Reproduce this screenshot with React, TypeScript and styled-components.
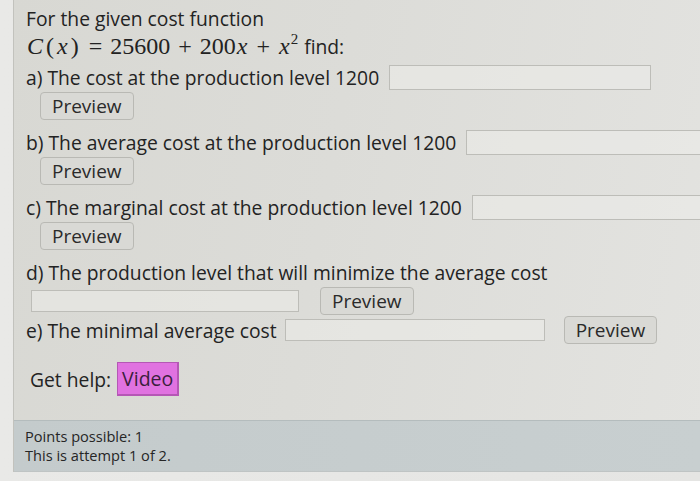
import styled, { createGlobalStyle } from 'styled-components'

const GlobalStyle = createGlobalStyle`
  html, body {
    margin: 0;
    padding: 0;
    width: 700px;
    height: 481px;
    overflow: hidden;
    background: #e7e7e4;
  }
  * {
    box-sizing: border-box;
  }
`

const questions = [
  { label: 'a) The cost at the production level 1200' },
  { label: 'b) The average cost at the production level 1200' },
  { label: 'c) The marginal cost at the production level 1200' },
]

function App() {
  return (
    <>
      <GlobalStyle />
      <Page>
        <Card>
          <Body>
            <Line>For the given cost function</Line>
            <MathLine>
              <Formula>
                <Var>C</Var>
                <Paren>(</Paren>
                <Var>x</Var>
                <Paren>)</Paren>
                <Op>=</Op>
                <span>25600</span>
                <Op>+</Op>
                <span>200</span>
                <Var>x</Var>
                <Op>+</Op>
                <Var>x</Var>
                <Sup>2</Sup>
              </Formula>
              <span>find:</span>
            </MathLine>

            {questions.map((q) => (
              <Block key={q.label}>
                <QuestionLine>
                  {q.label}
                  <AnswerBox />
                </QuestionLine>
                <ButtonRow>
                  <PreviewButton>Preview</PreviewButton>
                </ButtonRow>
              </Block>
            ))}

            <QuestionLine>
              d) The production level that will minimize the average cost
            </QuestionLine>
            <InlineRow $indent={5} $gap={21}>
              <AnswerBox $width={268} $height={22} $inline={false} />
              <PreviewButton>Preview</PreviewButton>
            </InlineRow>

            <InlineRow $indent={0} $gap={8} $top={1}>
              <span>e) The minimal average cost</span>
              <AnswerBox $width={260} $height={22} $inline={false} />
              <PreviewButton $shift={11}>Preview</PreviewButton>
            </InlineRow>

            <HelpRow>
              <span>Get help:</span>
              <VideoButton>Video</VideoButton>
            </HelpRow>
          </Body>

          <Footer>
            <FooterLine>Points possible: 1</FooterLine>
            <FooterLine>This is attempt 1 of 2.</FooterLine>
          </Footer>
        </Card>
      </Page>
    </>
  )
}

export default App

const Page = styled.div`
  width: 700px;
  height: 481px;
  padding: 0 0 9px 13px;
  display: flex;
  background: linear-gradient(90deg, #e9e9e7 0%, #e5e5e3 100%);
`

const Card = styled.div`
  flex: 1;
  display: flex;
  flex-direction: column;
  border-left: 1px solid #c2c2bd;
  background: linear-gradient(100deg, #d8d8d3 0%, #dcdcd8 45%, #e3e3e0 100%);
  overflow: hidden;
`

const Body = styled.div`
  flex: 1;
  padding: 5px 0 0 12px;
  font-family: 'Open Sans', 'Noto Sans', sans-serif;
  font-size: 19.3px;
  color: #232323;
  white-space: nowrap;
`

const Line = styled.div`
  height: 27px;
  line-height: 27px;
`

const MathLine = styled.div`
  height: 28px;
  display: flex;
  align-items: center;
  gap: 6px;
  margin-bottom: 2px;
`

const Formula = styled.span`
  font-family: 'Liberation Serif', 'DejaVu Serif', serif;
  font-size: 24px;
  color: #222;
  display: inline-flex;
  align-items: baseline;
`

const Var = styled.i`
  font-style: italic;
  margin: 0 1px;
`

const Paren = styled.span`
  margin: 0 2px;
`

const Op = styled.span`
  margin: 0 8px;
`

const Sup = styled.span`
  font-size: 15px;
  position: relative;
  top: -10px;
`

const Block = styled.div`
  margin-bottom: 7px;
`

const QuestionLine = styled.div`
  height: 30px;
  display: flex;
  align-items: center;
`

const AnswerBox = styled.span<{ $width?: number; $height?: number; $inline?: boolean }>`
  display: inline-block;
  flex: none;
  width: ${(p) => p.$width ?? 262}px;
  height: ${(p) => p.$height ?? 25}px;
  margin-left: ${(p) => (p.$inline === false ? 0 : 10)}px;
  background: rgba(236, 236, 233, 0.55);
  border: 1px solid #bdbdb8;
`

const ButtonRow = styled.div`
  padding-left: 14px;
  height: 28px;
`

const PreviewButton = styled.button<{ $shift?: number }>`
  height: 28px;
  padding: 0 11px;
  margin-left: ${(p) => p.$shift ?? 0}px;
  font-family: 'Open Sans', 'Noto Sans', sans-serif;
  font-size: 19px;
  color: #2a2a2a;
  background: #d9d9d5;
  border: 1px solid #b9b9b4;
  border-radius: 4px;
`

const InlineRow = styled.div<{ $indent: number; $gap: number; $top?: number }>`
  display: flex;
  align-items: center;
  gap: ${(p) => p.$gap}px;
  padding-left: ${(p) => p.$indent}px;
  margin-top: ${(p) => p.$top ?? 0}px;
  height: 28px;
`

const HelpRow = styled.div`
  display: flex;
  align-items: center;
  gap: 6px;
  margin-top: 18px;
  padding-left: 4px;
  height: 34px;
`

const VideoButton = styled.button`
  height: 34px;
  padding: 0 4px;
  font-family: 'Open Sans', 'Noto Sans', sans-serif;
  font-size: 19.5px;
  color: #3a1f3c;
  background: #e072e0;
  border: 1px solid #b557b5;
  border-right-width: 2px;
  border-bottom-width: 2px;
  border-radius: 0;
`

const Footer = styled.div`
  height: 52px;
  padding: 6px 0 0 11px;
  background: linear-gradient(90deg, #c4cbcc 0%, #c8cfd0 100%);
  border-top: 1px solid #b4bcbd;
  border-bottom: 1px solid #bfc4c4;
  font-family: 'Open Sans', 'Noto Sans', sans-serif;
  font-size: 14.6px;
  color: #262626;
`

const FooterLine = styled.div`
  line-height: 19px;
`
